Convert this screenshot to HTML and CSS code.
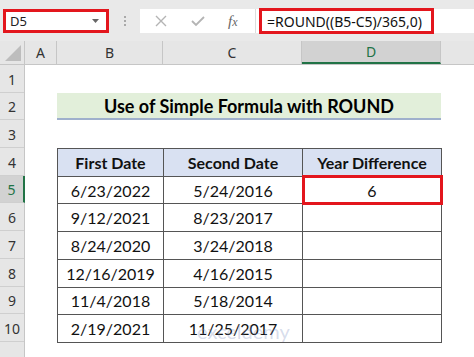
FILE: index.html
```html
<!DOCTYPE html>
<html lang="en">
<head>
    <meta charset="UTF-8">
    <meta name="viewport" content="width=device-width, initial-scale=1.0">
    <title>ROUND</title>
    <link rel="stylesheet" href="styles.css">
</head>
<body>

<div class="formulaBar">
    <div class="nameBox">
        <span>D5</span>
        <svg class="caret" width="7" height="4" viewBox="0 0 7 4"><path d="M0 0h7L3.5 4z" fill="#666"/></svg>
    </div>
    <div class="grip"><i></i><i></i><i></i></div>
    <div class="buttons">
        <svg width="14" height="14" viewBox="0 0 14 14"><path d="M2 2l10 10M12 2L2 12" stroke="#b4b4b4" stroke-width="1.4"/></svg>
        <svg width="16" height="14" viewBox="0 0 16 14"><path d="M2 7l4 4 8-8" stroke="#b4b4b4" stroke-width="1.8" fill="none"/></svg>
        <span class="fx">f<small>x</small></span>
    </div>
    <div class="input">
        <span class="formula">=ROUND((B5-C5)/365,0)</span>
    </div>
</div>

<div class="sheet">
    <div class="corner"><svg width="16" height="16" viewBox="0 0 16 16"><path d="M16 0V16H0z" fill="#bdbdbd"/></svg></div>
    <div class="colHeads">
        <div class="colHead colA">A</div>
        <div class="colHead colB">B</div>
        <div class="colHead colC">C</div>
        <div class="colHead colD active">D</div>
        <div class="colHead colE"></div>
    </div>
    <div class="rowHeads">
        <div class="rowHead">1</div>
        <div class="rowHead">2</div>
        <div class="rowHead">3</div>
        <div class="rowHead">4</div>
        <div class="rowHead active">5</div>
        <div class="rowHead">6</div>
        <div class="rowHead">7</div>
        <div class="rowHead">8</div>
        <div class="rowHead">9</div>
        <div class="rowHead">10</div>
        <div class="rowHead"></div>
    </div>
    <div class="cells">
        <div class="blankRow"></div>
        <div class="title">Use of Simple Formula with ROUND</div>
        <div class="blankRow"></div>
        <table class="dates">
            <tr><th>First Date</th><th>Second Date</th><th>Year Difference</th></tr>
            <tr><td>6/23/2022</td><td>5/24/2016</td><td class="selected">6</td></tr>
            <tr><td>9/12/2021</td><td>8/23/2017</td><td></td></tr>
            <tr><td>8/24/2020</td><td>3/24/2018</td><td></td></tr>
            <tr><td>12/16/2019</td><td>4/16/2015</td><td></td></tr>
            <tr><td>11/4/2018</td><td>5/18/2014</td><td></td></tr>
            <tr><td>2/19/2021</td><td>11/25/2017</td><td></td></tr>
        </table>
        <div class="watermark">exceldemy</div>
    </div>
</div>

</body>
</html>
```

FILE: styles.css
```css
*{margin: 0; padding: 0; box-sizing: border-box;}

body{
    width: 474px;
    height: 357px;
    overflow: hidden;
    background: #fff;
    font-family: "Noto Sans", sans-serif;
}

/* barra de formulas */
.formulaBar{
    display: flex;
    align-items: center;
    height: 41px;
    padding: 9px 0 8px 3px;
    background: #e9e9e9;
}
.nameBox{
    display: flex;
    align-items: center;
    justify-content: space-between;
    width: 106px;
    height: 24px;
    padding: 0 7px 0 4px;
    background: #fff;
    border: 3px solid #e3161d;
    font-size: 13px;
    color: #222;
}
.grip{
    display: flex;
    flex-direction: column;
    gap: 2px;
    width: 31px;
    align-items: center;
}
.grip i{
    width: 2px;
    height: 2px;
    background: #a9a9a9;
}
.buttons{
    display: flex;
    align-items: center;
    gap: 22px;
    height: 24px;
    width: 116px;
    padding-left: 14px;
    background: #fff;
    border-right: 1px solid #dcdcdc;
}
.fx{
    font-family: "Liberation Serif", serif;
    font-style: italic;
    font-size: 15px;
    color: #666;
}
.fx small{ font-size: 12px; }
.input{
    flex: 1;
    height: 24px;
    background: #fff;
    display: flex;
    align-items: center;
    padding-left: 3px;
}
.formula{
    display: flex;
    align-items: center;
    width: 175px;
    height: 26px;
    padding-left: 5px;
    border: 3px solid #e3161d;
    font-size: 14px;
    color: #111;
}

/* hoja */
.sheet{
    display: grid;
    grid-template-columns: 25px 1fr;
    grid-template-rows: 24px 1fr;
}
.corner{
    display: flex;
    align-items: flex-end;
    justify-content: flex-end;
    padding: 0 3px 3px 0;
    background: #e6e6e6;
    border-right: 1px solid #c6c6c6;
    border-bottom: 1px solid #c6c6c6;
}
.colHeads{
    display: flex;
    background: #e6e6e6;
    border-bottom: 1px solid #c6c6c6;
}
.colHead{
    display: flex;
    align-items: center;
    justify-content: center;
    border-right: 1px solid #c6c6c6;
    font-size: 14px;
    color: #333;
}
.colA{ width: 32px; }
.colB{ width: 106px; }
.colC{ width: 139px; }
.colD{ width: 139px; }
.colE{ flex: 1; border-right: none; }
.colHead.active{
    background: #d2d2d2;
    border-bottom: 2px solid #217346;
    color: #217346;
}

.rowHeads{
    display: flex;
    flex-direction: column;
    background: #e6e6e6;
    border-right: 1px solid #c6c6c6;
}
.rowHead{
    height: 27.7px;
    display: flex;
    align-items: flex-end;
    justify-content: center;
    padding-bottom: 3px;
    border-bottom: 1px solid #cfcfcf;
    font-size: 14px;
    color: #333;
}
.rowHead.active{
    background: #d2d2d2;
    color: #217346;
    border-right: 2px solid #217346;
    margin-right: -1px;
}

.cells{
    position: relative;
    padding-left: 32px;
}
.blankRow{ height: 27.7px; }
.title{
    width: 384px;
    height: 27.7px;
    display: flex;
    align-items: center;
    justify-content: center;
    background: #e2efda;
    border-bottom: 2px solid #9fb0cc;
    font-family: "Lato", sans-serif;
    font-weight: bold;
    font-size: 18px;
    color: #000;
}
.dates{
    border-collapse: collapse;
    font-family: "Lato", sans-serif;
    font-size: 16px;
    color: #111;
}
.dates th, .dates td{
    height: 27.7px;
    border: 1px solid #555;
    text-align: center;
    padding: 0;
}
.dates th{
    background: #d9e1f2;
    font-weight: bold;
}
.dates th:nth-child(1){ width: 106px; }
.dates th:nth-child(2){ width: 139px; }
.dates th:nth-child(3){ width: 139px; }
.dates td.selected{
    outline: 3px solid #e3161d;
    outline-offset: -2px;
}
.watermark{
    position: absolute;
    left: 172px;
    top: 254px;
    font-family: "Lato", sans-serif;
    font-size: 20px;
    color: rgba(120,140,190,.3);
}
```
